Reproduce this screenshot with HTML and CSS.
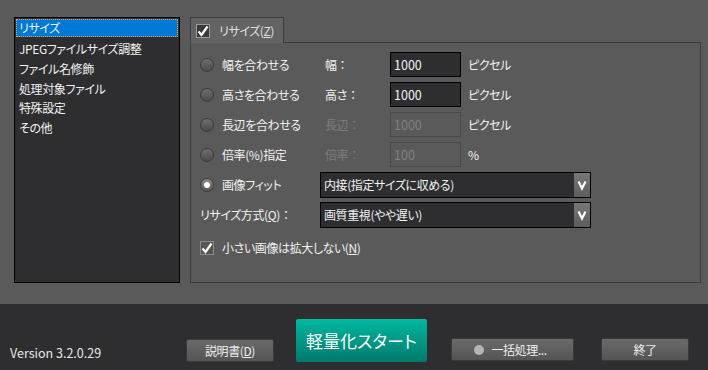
FILE: index.html
```html
<!DOCTYPE html>
<html lang="ja">
<head>
<meta charset="utf-8">
<link rel="stylesheet" href="styles.css">
</head>
<body>
<div class="main">
  <ul class="list">
    <li class="item selected"><span class="focus">リサイズ</span></li>
    <li class="item">JPEGファイルサイズ調整</li>
    <li class="item">ファイル名修飾</li>
    <li class="item">処理対象ファイル</li>
    <li class="item">特殊設定</li>
    <li class="item">その他</li>
  </ul>
  <div class="tabarea">
    <div class="tab">
      <span class="check dark"><svg viewBox="0 0 14 14" width="14" height="14"><path d="M2.5 7.5 L5.5 11 L11.5 2.5" fill="none" stroke="#fff" stroke-width="2.2"/></svg></span>
      <span class="tablabel">リサイズ(<u>Z</u>)</span>
    </div>
    <div class="panel">
      <div class="grid">
        <div class="opt"><span class="radio"></span><span>幅を合わせる</span></div>
        <div class="lab">幅<span class="fw">：</span></div>
        <div class="input">1000</div>
        <div class="unit">ピクセル</div>

        <div class="opt"><span class="radio"></span><span>高さを合わせる</span></div>
        <div class="lab">高さ<span class="fw">：</span></div>
        <div class="input">1000</div>
        <div class="unit">ピクセル</div>

        <div class="opt"><span class="radio"></span><span>長辺を合わせる</span></div>
        <div class="lab disabled">長辺<span class="fw">：</span></div>
        <div class="input off">1000</div>
        <div class="unit">ピクセル</div>

        <div class="opt"><span class="radio"></span><span>倍率(%)指定</span></div>
        <div class="lab disabled">倍率<span class="fw">：</span></div>
        <div class="input off">100</div>
        <div class="unit">%</div>

        <div class="opt"><span class="radio on"></span><span>画像フィット</span></div>
        <div class="select"><span class="seltext">内接(指定サイズに収める)</span><span class="arrow"><svg viewBox="0 0 16 24" width="16" height="24"><path d="M4.5 8.5 L8 15.5 L11.5 8.5" fill="none" stroke="#fff" stroke-width="2.2"/></svg></span></div>

        <div class="opt"><span>リサイズ方式(<u>Q</u>)<span class="fw">：</span></span></div>
        <div class="select"><span class="seltext">画質重視(やや遅い)</span><span class="arrow"><svg viewBox="0 0 16 24" width="16" height="24"><path d="M4.5 8.5 L8 15.5 L11.5 8.5" fill="none" stroke="#fff" stroke-width="2.2"/></svg></span></div>

        <div class="opt chkrow"><span class="check light"><svg viewBox="0 0 14 14" width="14" height="14"><path d="M2.5 7.5 L5.5 11 L11.5 2.5" fill="none" stroke="#fff" stroke-width="2.2"/></svg></span><span>小さい画像は拡大しない(<u>N</u>)</span></div>
      </div>
    </div>
  </div>
</div>
<div class="bottom">
  <div class="version">Version 3.2.0.29</div>
  <div class="btn help"><span>説明書(<u>D</u>)</span></div>
  <div class="start">軽量化スタート</div>
  <div class="btn batch"><span class="dot"></span><span>一括処理...</span></div>
  <div class="btn quit">終了</div>
</div>
</body>
</html>
```
FILE: styles.css
```css
html, body {
  margin: 0;
  padding: 0;
}
body {
  width: 708px;
  height: 370px;
  overflow: hidden;
  background: #5a5a5a;
  color: #f2f2f2;
  font-family: "Noto Sans CJK JP", "Noto Sans", sans-serif;
  font-size: 12px;
  font-feature-settings: "palt";
  letter-spacing: -0.4px;
}
.fw {
  font-feature-settings: normal;
  letter-spacing: 0;
}
.main {
  height: 304px;
  box-sizing: border-box;
  padding: 17px 0 0 14px;
  display: flex;
  gap: 10px;
}
.list {
  list-style: none;
  margin: 0;
  padding: 1px;
  width: 166px;
  height: 266px;
  box-sizing: border-box;
  border: 1px solid #000;
  background: #2e2e30;
  flex: none;
}
.item {
  height: 19.8px;
  line-height: 19.8px;
  padding-left: 3px;
  white-space: nowrap;
}
.item.selected {
  height: 18px;
  line-height: 16px;
  padding: 0;
  background: #0078d7;
  margin-bottom: 2px;
}
.focus {
  display: block;
  height: 16px;
  border: 1px dotted #f0a040;
  padding-left: 2px;
}
.tabarea {
  width: 511px;
  height: 266px;
  display: flex;
  flex-direction: column;
  flex: none;
}
.tab {
  width: 94px;
  height: 26px;
  box-sizing: border-box;
  border: 1px solid #3c3c3c;
  border-bottom: none;
  background: #636363;
  display: flex;
  align-items: center;
  padding-left: 5px;
  gap: 9px;
  margin-bottom: -1px;
  position: relative;
  z-index: 1;
}
.tablabel {
  color: #e0e0e0;
}
.check {
  width: 14px;
  height: 14px;
  box-sizing: border-box;
  display: inline-flex;
  align-items: center;
  justify-content: center;
  flex: none;
}
.check svg {
  display: block;
  margin: -1px;
}
.check.dark {
  border: 1px solid #9a9a9a;
  background: #3a3a3a;
}
.check.light {
  border: 1px solid #8a8a8a;
  background: #555;
}
.panel {
  flex: 1;
  border: 1px solid #3c3c3c;
  box-sizing: border-box;
  padding: 9px 0 0 9px;
}
.grid {
  display: grid;
  grid-template-columns: 120px 70px 71px auto;
  grid-auto-rows: 25px;
  row-gap: 5px;
  align-items: center;
}
.opt {
  display: flex;
  align-items: center;
  gap: 8px;
  white-space: nowrap;
}
.chkrow {
  grid-column: 1 / 5;
  margin-top: 6px;
}
.radio {
  width: 14px;
  height: 14px;
  box-sizing: border-box;
  border-radius: 50%;
  border: 1px solid #3a3a3a;
  background: linear-gradient(#6e6e6e, #4c4c4c);
  display: flex;
  align-items: center;
  justify-content: center;
  flex: none;
}
.radio.on {
  background: linear-gradient(#8a8a8a, #5a5a5a);
}
.radio.on::after {
  content: "";
  width: 6px;
  height: 6px;
  border-radius: 50%;
  background: #fff;
}
.lab {
  padding-left: 5px;
  white-space: nowrap;
}
.lab.disabled {
  color: #7c7c7c;
}
.input {
  height: 25px;
  box-sizing: border-box;
  border: 1px solid #000;
  background: #2e2e30;
  line-height: 23px;
  padding-left: 3px;
  font-size: 12.5px;
  letter-spacing: 0;
}
.input.off {
  border-color: #4a4a4a;
  background: #5a5a5a;
  color: #808080;
}
.unit {
  padding-left: 7px;
}
.select {
  grid-column: 2 / 5;
  width: 271px;
  height: 26px;
  box-sizing: border-box;
  border: 1px solid #000;
  background: #2e2e30;
  display: flex;
  align-items: stretch;
}
.seltext {
  flex: 1;
  padding-left: 3px;
  line-height: 24px;
}
.arrow {
  width: 16px;
  background: linear-gradient(#787878, #5c5c5c);
  display: flex;
  align-items: center;
}
.bottom {
  height: 66px;
  background: #2e2e30;
  display: flex;
  align-items: flex-end;
  padding: 0 0 8px 0;
  box-sizing: border-box;
}
.bottom > * {
  flex: none;
}
.version {
  width: 186px;
  padding-left: 10px;
  box-sizing: border-box;
  color: #e8e8e8;
  font-size: 12.5px;
  letter-spacing: 0;
  line-height: 16px;
  margin-bottom: 1px;
}
.btn {
  height: 23px;
  box-sizing: border-box;
  border: 1px solid #3a3a3a;
  border-radius: 2px;
  background: linear-gradient(#6a6a6a, #555);
  display: flex;
  align-items: center;
  justify-content: center;
  color: #f0f0f0;
}
.help {
  width: 88px;
}
.start {
  width: 131px;
  height: 43px;
  margin-left: 22px;
  border-radius: 2px;
  background: linear-gradient(#00b8a0, #007a6c);
  color: #fff;
  font-size: 17px;
  letter-spacing: 0;
  display: flex;
  align-items: center;
  justify-content: center;
}
.batch {
  width: 123px;
  margin-left: 24px;
  margin-bottom: 1px;
  gap: 7px;
  padding-right: 4px;
}
.dot {
  width: 10px;
  height: 10px;
  border-radius: 50%;
  background: #b4b4b4;
}
.quit {
  width: 88px;
  margin-left: 27px;
  margin-bottom: 1px;
}
```
